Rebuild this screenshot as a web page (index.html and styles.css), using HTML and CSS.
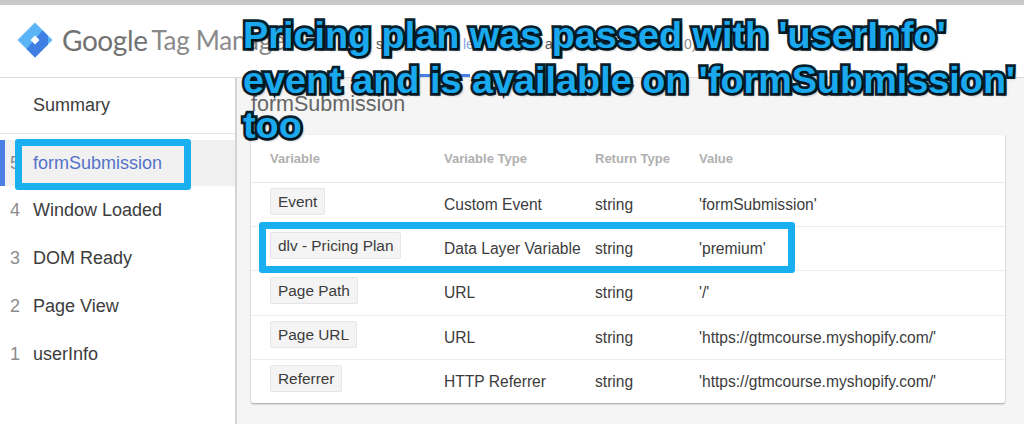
FILE: index.html
```html
<!DOCTYPE html>
<html lang="en">
<head>
    <meta charset="UTF-8">
    <title>Google Tag Manager - Preview</title>
    <link rel="stylesheet" href="styles.css">
</head>
<body>

<div class="top-strip"></div>

<header class="topbar">
    <svg class="logo" viewBox="0 0 36 36" width="36" height="36">
        <path fill="#5ab4f5" d="M18 0.5 L35.5 18 L18 35.5 L0.5 18 Z"/>
        <path fill="#3f7fe3" d="M25.5 8.5 L31 14 L31 22.5 L18 35.5 L9.5 27 Z"/>
        <path fill="#fff" d="M18 13.5 L22.5 18 L18 22.5 L13.5 18 Z"/>
    </svg>
    <span class="brand-google">Google</span>
    <span class="brand-product">Tag Manager</span>
    <span class="crumb crumb-s">s</span>
    <span class="crumb crumb-le">le</span>
    <span class="crumb crumb-a">a</span>
    <span class="crumb crumb-end">0)</span>
    <div class="tab-line"></div>
</header>

<div class="layout">
    <aside class="sidebar">
        <div class="summary">Summary</div>
        <ul class="events">
            <li class="event active"><span class="num">5</span>formSubmission</li>
            <li class="event"><span class="num">4</span>Window Loaded</li>
            <li class="event"><span class="num">3</span>DOM Ready</li>
            <li class="event"><span class="num">2</span>Page View</li>
            <li class="event"><span class="num">1</span>userInfo</li>
        </ul>
    </aside>

    <main class="content">
        <h2 class="event-title">formSubmission</h2>
        <table class="var-table">
            <thead>
                <tr>
                    <th class="col-name">Variable</th>
                    <th class="col-type">Variable Type</th>
                    <th class="col-return">Return Type</th>
                    <th>Value</th>
                </tr>
            </thead>
            <tbody>
                <tr>
                    <td><span class="chip">Event</span></td>
                    <td>Custom Event</td>
                    <td>string</td>
                    <td>'formSubmission'</td>
                </tr>
                <tr>
                    <td><span class="chip">dlv - Pricing Plan</span></td>
                    <td>Data Layer Variable</td>
                    <td>string</td>
                    <td>'premium'</td>
                </tr>
                <tr class="row-tall">
                    <td><span class="chip">Page Path</span></td>
                    <td>URL</td>
                    <td>string</td>
                    <td>'/'</td>
                </tr>
                <tr>
                    <td><span class="chip">Page URL</span></td>
                    <td>URL</td>
                    <td>string</td>
                    <td>'https://gtmcourse.myshopify.com/'</td>
                </tr>
                <tr>
                    <td><span class="chip">Referrer</span></td>
                    <td>HTTP Referrer</td>
                    <td>string</td>
                    <td>'https://gtmcourse.myshopify.com/'</td>
                </tr>
            </tbody>
        </table>
    </main>
</div>

<!-- Annotations drawn over the screenshot -->
<div class="mark mark-event"></div>
<div class="mark mark-row"></div>
<div class="callout">Pricing plan was passed with 'userInfo'<br>event and is available on 'formSubmission'<br>too</div>

</body>
</html>
```

FILE: styles.css
```css
body {
    margin: 0;
    position: relative;
    overflow: hidden;
    display: flex;
    flex-direction: column;
    height: 424px;
    font-family: "Liberation Sans", Arial, sans-serif;
    color: #3c3c3c;
    background-color: #fff;
}
.top-strip {
    height: 5px;
    background-color: #c9c9c9;
}

/* Header */
.topbar {
    position: relative;
    height: 72px;
    flex: none;
    display: flex;
    align-items: center;
    padding-left: 17px;
    border-bottom: 1px solid #dcdcdc;
}
.logo {
    flex: none;
    margin-top: -3px;
}
.brand-google {
    margin-left: 9px;
    margin-top: -3px;
    font-family: Lato, sans-serif;
    font-size: 28px;
    letter-spacing: -0.4px;
    color: #727272;
}
.brand-product {
    margin-left: 4px;
    margin-top: -3px;
    font-family: Lato, sans-serif;
    font-size: 26px;
    letter-spacing: -0.3px;
    color: #8a8a8a;
    white-space: nowrap;
}
.crumb {
    position: absolute;
    top: 31px;
    font-size: 14px;
    color: #555;
}
.crumb-s { left: 376px; }
.crumb-le { left: 463px; color: #8aa4e0; }
.crumb-a { left: 545px; }
.crumb-end { left: 684px; color: #888; }
.tab-line {
    position: absolute;
    left: 420px;
    bottom: 0;
    width: 50px;
    height: 3px;
    background-color: #4a7fe6;
}

/* Sidebar */
.layout {
    flex: 1;
    display: flex;
    min-height: 0;
}
.sidebar {
    width: 235px;
    flex: none;
    border-right: 2px solid #d4d4d4;
}
.summary {
    height: 55px;
    line-height: 55px;
    padding-left: 33px;
    font-size: 18px;
    border-bottom: 1px solid #e6e6e6;
}
.events {
    list-style: none;
    margin: 6px 0 0;
    padding: 0;
}
.event {
    display: flex;
    align-items: center;
    height: 48px;
    font-size: 18px;
}
.event.active {
    height: 46px;
    background-color: #f1f1f1;
    color: #5472c8;
    box-shadow: inset 5px 0 0 #4a7fe6;
}
.num {
    width: 23px;
    margin-left: 10px;
    color: #8c8c8c;
}

/* Main column */
.content {
    flex: 1;
    padding: 0 19px 0 14px;
    background-color: #f5f5f5;
}
.event-title {
    margin: 0;
    height: 57px;
    line-height: 52px;
    font-size: 21.5px;
    font-weight: normal;
    color: #666;
}
.var-table {
    width: 754px;
    border-collapse: collapse;
    table-layout: fixed;
    background-color: #fff;
    border-radius: 2px;
    box-shadow: 0 1px 2px rgba(0, 0, 0, 0.35);
    font-size: 15.6px;
}
.var-table th {
    height: 47px;
    padding: 0;
    text-align: left;
    font-size: 13px;
    color: #b0b0b0;
    border-bottom: 1px solid #e8e8e8;
}
.var-table th.col-name {
    width: 174px;
    padding-left: 19px;
}
.col-type {
    width: 151px;
}
.col-return {
    width: 104px;
}
.var-table td {
    height: 43px;
    padding: 0;
    border-bottom: 1px solid #ececec;
    white-space: nowrap;
}
.var-table .row-tall td {
    height: 44px;
}
.var-table tr:last-child td {
    border-bottom: none;
}
.var-table td:first-child {
    padding-left: 19px;
}
.chip {
    display: inline-block;
    position: relative;
    top: -3px;
    padding: 4px 7px 4px;
    line-height: 17px;
    font-size: 15.4px;
    background-color: #f4f4f4;
    border: 1px solid #e6e6e6;
    border-radius: 2px;
}

/* Annotations */
.mark {
    position: absolute;
    box-sizing: border-box;
    border: 7px solid #1ab0f0;
    border-radius: 3px;
}
.mark-event {
    left: 15px;
    top: 139px;
    width: 176px;
    height: 51px;
}
.mark-row {
    left: 259px;
    top: 222px;
    width: 536px;
    height: 51px;
}
.callout {
    position: absolute;
    left: 243px;
    top: 13px;
    font-size: 37.8px;
    line-height: 45px;
    font-weight: bold;
    color: #1aa9ee;
    white-space: nowrap;
    -webkit-text-stroke: 5.5px #06222f;
    paint-order: stroke fill;
    text-shadow: 2px 2px 3px rgba(0, 0, 0, 0.6);
}
```
